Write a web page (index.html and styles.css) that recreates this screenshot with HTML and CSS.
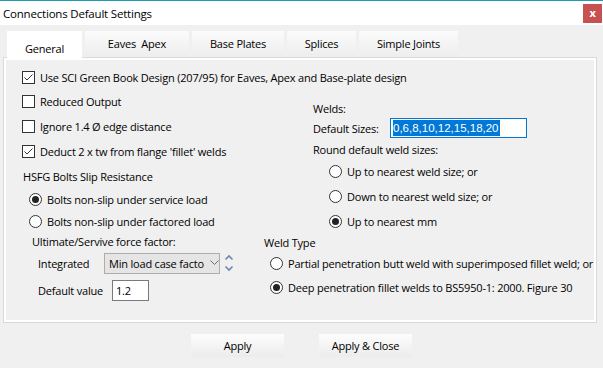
FILE: index.html
```html
<!DOCTYPE html>
<html lang="en">
<head>
    <meta charset="UTF-8">
    <title>Connections Default Settings</title>
    <link rel="stylesheet" href="styles.css">
</head>
<body>
    <div class="titlebar">
        <span class="title">Connections Default Settings</span>
        <span class="close">x</span>
    </div>

    <div class="tabs">
        <div class="tab active tab-general">General</div>
        <div class="tab tab-eaves">Eaves&nbsp; Apex</div>
        <div class="tab tab-base">Base Plates</div>
        <div class="tab tab-splices">Splices</div>
        <div class="tab tab-simple">Simple Joints</div>
    </div>

    <div class="panel">
        <div class="row first">
            <span class="check"><svg width="11" height="11" viewBox="0 0 11 11"><polyline points="1.5,5.5 4,8 9.5,2.5" fill="none" stroke="#333" stroke-width="1"/></svg></span>
            Use SCI Green Book Design (207/95) for Eaves, Apex and Base-plate design
        </div>

        <div class="cols">
            <div class="col-left">
                <div class="row h25"><span class="check"></span>Reduced Output</div>
                <div class="row h25"><span class="check"></span>Ignore 1.4 Ø edge distance</div>
                <div class="row h25">
                    <span class="check"><svg width="11" height="11" viewBox="0 0 11 11"><polyline points="1.5,5.5 4,8 9.5,2.5" fill="none" stroke="#333" stroke-width="1"/></svg></span>
                    Deduct 2 x tw from flange 'fillet' welds
                </div>
                <div class="row group-label">HSFG Bolts Slip Resistance</div>
                <div class="row h22 indent-radio"><span class="radio on"></span>Bolts non-slip under service load</div>
                <div class="row h22 indent-radio"><span class="radio"></span>Bolts non-slip under factored load</div>
            </div>

            <div class="col-right">
                <div class="row h20">Welds:</div>
                <div class="row h20">
                    <span class="field-label">Default Sizes:</span>
                    <span class="text-input focused"><span class="selected">0,6,8,10,12,15,18,20</span></span>
                </div>
                <div class="row h20 gap1">Round default weld sizes:</div>
                <div class="row h25 indent-right"><span class="radio"></span>Up to nearest weld size; or</div>
                <div class="row h25 indent-right"><span class="radio"></span>Down to nearest weld size; or</div>
                <div class="row h25 indent-right"><span class="radio on"></span>Up to nearest mm</div>
            </div>
        </div>

        <div class="cols lower">
            <div class="lower-left">
                <div class="row h17 indent-10">Ultimate/Servive force factor:</div>
                <div class="row h22 indent-16 gap2">
                    <span class="label-integrated">Integrated</span>
                    <span class="select">
                        <span class="select-text">Min load case factor</span>
                        <svg class="chevron" width="9" height="6" viewBox="0 0 9 6"><polyline points="0.5,0.5 4.5,4.5 8.5,0.5" fill="none" stroke="#6d6d6d" stroke-width="1"/></svg>
                    </span>
                    <svg class="spinner" width="10" height="18" viewBox="0 0 10 18"><polyline points="1.5,5.5 5,2 8.5,5.5" fill="none" stroke="#6b87b0" stroke-width="1.6"/><polyline points="1.5,12.5 5,16 8.5,12.5" fill="none" stroke="#6b87b0" stroke-width="1.6"/></svg>
                </div>
                <div class="row h22 indent-16 gap5">
                    <span class="label-default">Default value</span>
                    <span class="text-input small">1.2</span>
                </div>
            </div>
            <div class="lower-right">
                <div class="row h18">Weld Type</div>
                <div class="row h24 indent-6"><span class="radio"></span>Partial penetration butt weld with superimposed fillet weld; or</div>
                <div class="row h24 indent-6"><span class="radio on"></span>Deep penetration fillet welds to BS5950-1: 2000. Figure 30</div>
            </div>
        </div>
    </div>

    <div class="buttons">
        <button>Apply</button>
        <button>Apply &amp; Close</button>
    </div>
</body>
</html>
```

FILE: styles.css
```css
* {
    box-sizing: border-box;
}
body {
    margin: 0;
    width: 603px;
    height: 368px;
    overflow: hidden;
    background: #f0f0f0;
    font-family: "Open Sans", "Noto Sans", sans-serif;
    font-size: 11px;
    letter-spacing: -0.2px;
    color: #000;
}

/* title bar */
.titlebar {
    height: 25px;
    background: #fff;
    border-top: 1px solid #1f9cb4;
    display: flex;
    align-items: center;
    justify-content: space-between;
    padding-left: 3px;
}
.title {
    font-size: 11.5px;
}
.close {
    width: 19px;
    height: 19px;
    margin-right: 1px;
    background: #c75050;
    color: #fff;
    font-weight: bold;
    font-size: 11px;
    display: flex;
    align-items: center;
    justify-content: center;
    padding-bottom: 2px;
}

/* tabs */
.tabs {
    display: flex;
    gap: 3px;
    margin-top: 6px;
    padding-left: 7px;
    height: 26px;
    position: relative;
    z-index: 1;
}
.tab {
    height: 26px;
    display: flex;
    align-items: center;
    justify-content: center;
    padding-bottom: 1px;
    background: linear-gradient(#fbfbfb, #ededed);
}
.tab.active {
    height: 27px;
    background: #fff;
    padding-top: 7px;
    padding-bottom: 0;
}
.tab-general { width: 75px; }
.tab-eaves { width: 104px; }
.tab-base { width: 92px; }
.tab-splices { width: 69px; }
.tab-simple { width: 99px; }

/* panel */
.panel {
    margin-left: 3px;
    width: 594px;
    height: 266px;
    border: 1px solid #d9d9d9;
    box-shadow: inset 0 0 0 2px #fff;
    padding: 8px 0 0 18px;
}
.row {
    display: flex;
    align-items: center;
    white-space: nowrap;
}
.row.first { height: 22px; }
.h17 { height: 17px; }
.h18 { height: 18px; }
.h20 { height: 20px; }
.h22 { height: 22px; }
.h24 { height: 24px; }
.h25 { height: 25px; }
.gap1 { margin-top: 1px; }
.gap2 { margin-top: 2px; }
.gap5 { margin-top: 5px; }
.indent-6 { padding-left: 6px; }
.indent-10 { padding-left: 10px; }
.indent-16 { padding-left: 16px; }
.indent-radio { padding-left: 7px; }
.indent-right { padding-left: 16px; }

.check, .radio {
    width: 13px;
    height: 13px;
    flex: none;
    margin-right: 5px;
    border: 1px solid #333;
    background: #fff;
    display: flex;
    align-items: center;
    justify-content: center;
}
.radio {
    border-radius: 50%;
}
.radio.on::after {
    content: "";
    width: 7px;
    height: 7px;
    border-radius: 50%;
    background: #222;
}

.cols {
    display: flex;
    margin-top: 1px;
    height: 144px;
}
.col-left {
    width: 291px;
    flex: none;
}
.group-label {
    height: 24px;
    padding-left: 1px;
}
.col-right {
    padding-top: 9px;
}
.field-label {
    width: 77px;
}
.text-input {
    display: flex;
    align-items: center;
    background: #fff;
    border: 1px solid #7a7a7a;
    padding-left: 3px;
}
.text-input.focused {
    width: 137px;
    height: 20px;
    border-color: #0078d7;
    padding-left: 2px;
}
.selected {
    background: #0078d7;
    color: #fff;
    height: 16px;
    line-height: 16px;
    font-family: "Liberation Sans", Arial, sans-serif;
    font-size: 11.5px;
    letter-spacing: 0;
    padding-right: 1px;
}
.text-input.small {
    width: 37px;
    height: 21px;
}

.cols.lower {
    margin-top: 0;
    height: auto;
}
.lower-left {
    width: 242px;
    flex: none;
}
.label-integrated {
    width: 66px;
}
.label-default {
    width: 74px;
}
.select {
    width: 116px;
    height: 21px;
    background: #e5e5e5;
    border: 1px solid #adadad;
    display: flex;
    align-items: center;
    padding-left: 4px;
}
.select-text {
    width: 95px;
    overflow: hidden;
}
.chevron {
    margin-left: 6px;
}
.spinner {
    margin-left: 4px;
}

/* bottom buttons */
.buttons {
    display: flex;
    justify-content: center;
    gap: 35px;
    margin-top: 11px;
}
button {
    width: 93px;
    height: 23px;
    border: none;
    background: linear-gradient(#fdfdfd, #ececec);
    font-family: inherit;
    font-size: 11px;
    letter-spacing: -0.2px;
    color: #000;
    padding: 0;
}
```
